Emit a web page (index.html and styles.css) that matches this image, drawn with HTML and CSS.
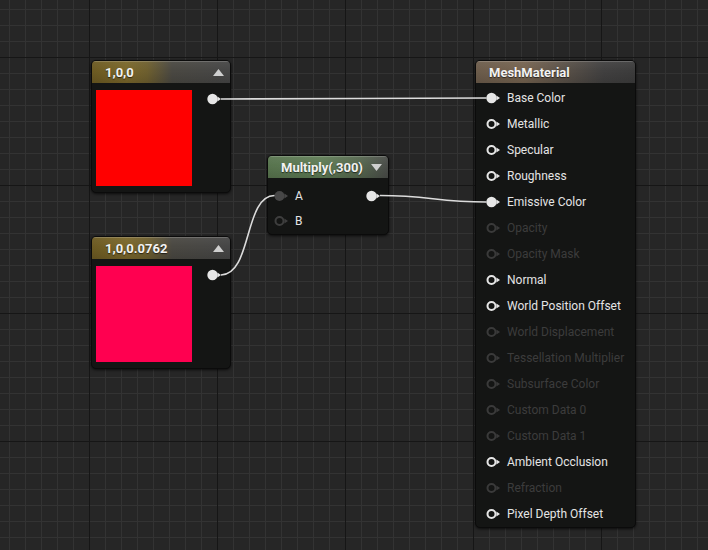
FILE: index.html
```html
<!DOCTYPE html>
<html>
<head>
<meta charset="utf-8">
<link rel="stylesheet" href="styles.css">
</head>
<body>
<svg class="defs" width="0" height="0" aria-hidden="true">
  <defs>
    <symbol id="pin-on" viewBox="0 0 15 12">
      <circle cx="5.5" cy="6" r="5.2" fill="currentColor"/>
      <path d="M10.4 3.4 L14 6 L10.4 8.6 Z" fill="currentColor"/>
    </symbol>
    <symbol id="pin-off" viewBox="0 0 15 12">
      <circle cx="5.5" cy="6" r="4" fill="none" stroke="currentColor" stroke-width="2"/>
      <path d="M10.4 3.4 L14 6 L10.4 8.6 Z" fill="currentColor"/>
    </symbol>
    <symbol id="pin-dim" viewBox="0 0 15 12">
      <circle cx="5.5" cy="6" r="5" fill="currentColor"/>
      <path d="M10.4 3.4 L14 6 L10.4 8.6 Z" fill="currentColor"/>
    </symbol>
  </defs>
</svg>
<div class="canvas">
  <div class="node n-const n1">
    <div class="head head-gold">
      <span class="title">1,0,0</span>
      <svg class="tri" viewBox="0 0 11 7"><path d="M0 7 L5.5 0 L11 7 Z"/></svg>
    </div>
    <div class="const-body">
      <div class="swatch sw-red"></div>
      <svg class="pin on"><use href="#pin-on"/></svg>
    </div>
  </div>

  <div class="node n-const n2">
    <div class="head head-gold">
      <span class="title">1,0,0.0762</span>
      <svg class="tri" viewBox="0 0 11 7"><path d="M0 7 L5.5 0 L11 7 Z"/></svg>
    </div>
    <div class="const-body">
      <div class="swatch sw-pink"></div>
      <svg class="pin on"><use href="#pin-on"/></svg>
    </div>
  </div>

  <div class="node n-mul">
    <div class="head head-green">
      <span class="title">Multiply(,300)</span>
      <svg class="tri" viewBox="0 0 11 7"><path d="M0 0 L11 0 L5.5 7 Z"/></svg>
    </div>
    <div class="mul-body">
      <div class="inputs">
        <div class="row mrow"><svg class="pin dimfill"><use href="#pin-dim"/></svg><span class="lbl">A</span></div>
        <div class="row mrow"><svg class="pin ring-dark"><use href="#pin-off"/></svg><span class="lbl">B</span></div>
      </div>
      <div class="outputs">
        <div class="row mrow"><svg class="pin on"><use href="#pin-on"/></svg></div>
      </div>
    </div>
  </div>

  <div class="node n-mat">
    <div class="head head-brown">
      <span class="title">MeshMaterial</span>
    </div>
    <div class="mat-body">
      <div class="row"><svg class="pin on"><use href="#pin-on"/></svg><span class="lbl">Base Color</span></div>
      <div class="row"><svg class="pin on"><use href="#pin-off"/></svg><span class="lbl">Metallic</span></div>
      <div class="row"><svg class="pin on"><use href="#pin-off"/></svg><span class="lbl">Specular</span></div>
      <div class="row"><svg class="pin on"><use href="#pin-off"/></svg><span class="lbl">Roughness</span></div>
      <div class="row"><svg class="pin on"><use href="#pin-on"/></svg><span class="lbl">Emissive Color</span></div>
      <div class="row off"><svg class="pin"><use href="#pin-off"/></svg><span class="lbl">Opacity</span></div>
      <div class="row off"><svg class="pin"><use href="#pin-off"/></svg><span class="lbl">Opacity Mask</span></div>
      <div class="row"><svg class="pin on"><use href="#pin-off"/></svg><span class="lbl">Normal</span></div>
      <div class="row"><svg class="pin on"><use href="#pin-off"/></svg><span class="lbl">World Position Offset</span></div>
      <div class="row off"><svg class="pin"><use href="#pin-off"/></svg><span class="lbl">World Displacement</span></div>
      <div class="row off"><svg class="pin"><use href="#pin-off"/></svg><span class="lbl">Tessellation Multiplier</span></div>
      <div class="row off"><svg class="pin"><use href="#pin-off"/></svg><span class="lbl">Subsurface Color</span></div>
      <div class="row off"><svg class="pin"><use href="#pin-off"/></svg><span class="lbl">Custom Data 0</span></div>
      <div class="row off"><svg class="pin"><use href="#pin-off"/></svg><span class="lbl">Custom Data 1</span></div>
      <div class="row"><svg class="pin on"><use href="#pin-off"/></svg><span class="lbl">Ambient Occlusion</span></div>
      <div class="row off"><svg class="pin"><use href="#pin-off"/></svg><span class="lbl">Refraction</span></div>
      <div class="row"><svg class="pin on"><use href="#pin-off"/></svg><span class="lbl">Pixel Depth Offset</span></div>
    </div>
  </div>

  <svg class="wires" width="708" height="550" viewBox="0 0 708 550">
    <path d="M221 99 C 330 99, 380 98, 486.5 98"/>
    <path d="M221 275 C 252 275, 244 195.5, 274.5 195.5"/>
    <path d="M380 195.5 C 430 195.5, 436 202, 486.5 202"/>
  </svg>
</div>
</body>
</html>
```

FILE: styles.css
```css
html, body {
  margin: 0;
  padding: 0;
  background: #262626;
}

.defs {
  position: absolute;
  width: 0;
  height: 0;
  overflow: hidden;
}

.canvas {
  position: relative;
  width: 708px;
  height: 550px;
  overflow: hidden;
  font-family: Roboto, "Liberation Sans", sans-serif;
  background-color: #262626;
  background-image:
    linear-gradient(to right, #161616 1px, transparent 1px),
    linear-gradient(to bottom, #161616 1px, transparent 1px),
    linear-gradient(to right, #333333 1px, transparent 1px),
    linear-gradient(to bottom, #333333 1px, transparent 1px);
  background-size: 128px 128px, 128px 128px, 16px 16px, 16px 16px;
  background-position: 89px 0, 0 57px, 9px 0, 0 9px;
}

.node {
  position: absolute;
  box-sizing: border-box;
  background: #141514;
  border: 1px solid #0b0b0b;
  border-radius: 5px;
  box-shadow: 0 1px 3px rgba(0, 0, 0, 0.7);
  overflow: hidden;
}

.n1 { left: 91px; top: 60px; width: 140px; height: 133px; }
.n2 { left: 91px; top: 236px; width: 140px; height: 133px; }
.n-mul { left: 267px; top: 155px; width: 122px; height: 80px; }
.n-mat { left: 475px; top: 60px; width: 161px; height: 468px; }

.head {
  height: 22px;
  display: flex;
  align-items: center;
  justify-content: space-between;
  padding: 0 6px 0 13px;
  box-shadow: inset 0 1px 0 rgba(255, 255, 255, 0.18);
}

.title {
  font-size: 13px;
  font-weight: 700;
  color: #f2f2f2;
  text-shadow: 0 1px 1px rgba(0, 0, 0, 0.6);
  white-space: nowrap;
}

.tri {
  width: 11px;
  height: 7px;
  fill: #cfcfcf;
}

.head-gold {
  background:
    linear-gradient(to bottom, rgba(255, 255, 255, 0.05), rgba(0, 0, 0, 0) 45%, rgba(0, 0, 0, 0.12)),
    linear-gradient(to right, #6c5a22 0%, #7a672b 25%, #6e5f2f 40%, #4a4842 58%, #464646 100%);
}

.head-green {
  background:
    linear-gradient(to bottom, rgba(255, 255, 255, 0.06), rgba(0, 0, 0, 0) 45%, rgba(0, 0, 0, 0.12)),
    linear-gradient(to right, #58744e 0%, #5f7c56 45%, #56684f 75%, #4a4c49 100%);
}

.head-brown {
  background:
    linear-gradient(to bottom, rgba(255, 255, 255, 0.06), rgba(0, 0, 0, 0) 45%, rgba(0, 0, 0, 0.12)),
    linear-gradient(to right, #6c5c4b 0%, #756350 30%, #5a5148 55%, #414040 80%, #3c3c3c 100%);
}

.const-body {
  display: flex;
  align-items: flex-start;
  padding: 7px 4px 6px 4px;
}

.swatch {
  width: 96px;
  height: 96px;
  flex: none;
}

.sw-red { background: #ff0000; }
.sw-pink { background: #ff0050; }

.pin {
  width: 15px;
  height: 12px;
  flex: none;
  color: #3a3a3a;
}

.pin.on { color: #e6e6e6; }
.pin.dimfill { color: #474747; }
.pin.ring-dark { color: #3e3e3e; }

.const-body .pin {
  margin: 3px 0 0 15px;
}

.mul-body {
  display: flex;
  justify-content: space-between;
  padding: 5px 7px 0 6px;
}

.row {
  display: flex;
  align-items: center;
  height: 26px;
  color: #e4e4e4;
  font-size: 12px;
  white-space: nowrap;
}

.row.mrow { height: 25px; }

.row .lbl { margin-left: 6px; }

.row.off { color: #3c3c3c; }

.mat-body {
  padding: 2px 0 0 10px;
}

.wires {
  position: absolute;
  left: 0;
  top: 0;
  pointer-events: none;
  fill: none;
  stroke: #dcdcdc;
  stroke-width: 1.6;
}
```
